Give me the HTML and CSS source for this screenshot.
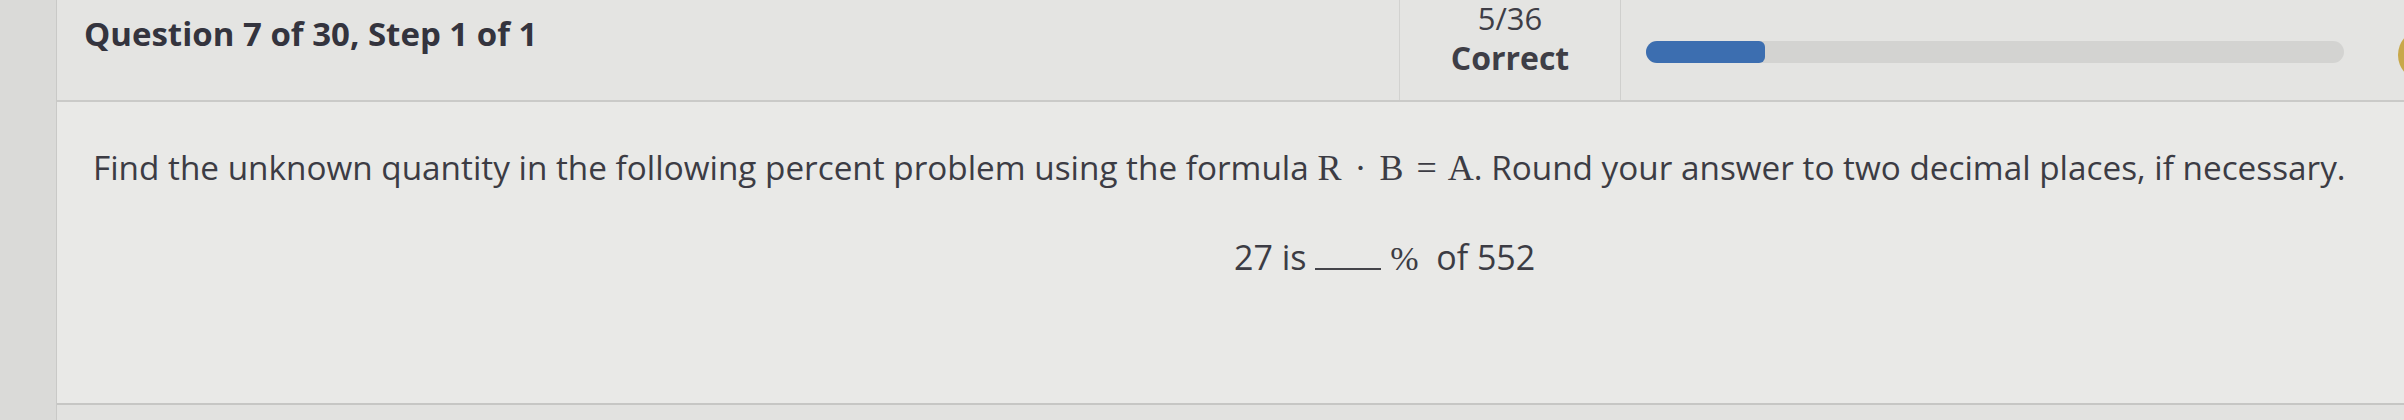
FILE: index.html
```html
<!DOCTYPE html>
<html lang="en">
<head>
    <meta charset="UTF-8">
    <meta name="viewport" content="width=device-width, initial-scale=1.0">
    <title>Question 7 of 30</title>
    <link rel="stylesheet" href="styles.css">
</head>
<body>
    <div class="page">
        <div class="sidebar"></div>

        <div class="main">
            <div class="header">
                <div class="title">Question 7 of 30, Step 1 of 1</div>
                <div class="score">
                    <div class="score-count">5/36</div>
                    <div class="score-label">Correct</div>
                </div>
                <div class="progress">
                    <div class="track">
                        <div class="fill" style="width: 17%"></div>
                    </div>
                </div>
                <div class="edge-button"></div>
            </div>

            <div class="question">
                <p class="prompt">
                    Find the unknown quantity in the following percent problem using the formula
                    <span class="math">R &middot; B = A</span>. Round your answer to two decimal places, if necessary.
                </p>
                <p class="problem">
                    27 is <span class="blank"></span> <span class="pct">%</span>&nbsp; of 552
                </p>
            </div>
            <div class="footer"></div>
        </div>
    </div>
</body>
</html>
```

FILE: styles.css
```css
html, body {
    margin: 0;
    height: 420px;
    overflow: hidden;
}
body {
    font-family: "Open Sans", "Liberation Sans", sans-serif;
    background-color: #dcdcda;
    color: #3a3a42;
}
.page {
    display: flex;
    height: 420px;
}
.sidebar {
    width: 56px;
    border-right: 1px solid #c9c9c7;
    background-color: #dadad8;
}
.main {
    flex: 1;
    display: flex;
    flex-direction: column;
}
.header {
    position: relative;
    display: flex;
    height: 100px;
    border-bottom: 2px solid #cacac8;
    background-color: #e4e4e2;
}
.title {
    flex: 1;
    padding: 12px 0 0 27px;
    font-size: 33px;
    line-height: 44px;
    font-weight: bold;
    color: #34343e;
}
.score {
    width: 220px;
    border-left: 1px solid #d2d2d0;
    border-right: 1px solid #cfcfcd;
    text-align: center;
    font-size: 31px;
    line-height: 40px;
    color: #3e3e46;
}
.score-count {
    margin-top: -2px;
}
.score-label {
    font-weight: bold;
    font-size: 32px;
}
.progress {
    width: 783px;
    padding: 41px 0 0 25px;
    box-sizing: border-box;
}
.track {
    width: 698px;
    height: 22px;
    border-radius: 11px;
    background-color: #d3d3d1;
    overflow: hidden;
}
.fill {
    height: 100%;
    border-radius: 6px;
    background-color: #3c6eb0;
}
.edge-button {
    position: absolute;
    right: -40px;
    top: 30px;
    width: 46px;
    height: 50px;
    border-radius: 50%;
    background-color: #c8a84a;
}
.question {
    flex: 1;
    padding: 44px 0 0 36px;
    background-color: #e9e9e7;
    border-bottom: 2px solid #c6c6c4;
}
.prompt {
    margin: 0;
    font-size: 33.3px;
    line-height: 42px;
    color: #3c3c44;
}
.math {
    font-family: "Liberation Serif", serif;
    font-size: 36px;
    word-spacing: 4px;
}
.problem {
    margin: 47px 0 0 1141px;
    font-size: 34px;
    line-height: 42px;
    color: #3c3c44;
}
.blank {
    display: inline-block;
    width: 66px;
    border-bottom: 2px solid #44444a;
}
.pct {
    font-family: "Liberation Serif", serif;
}
.footer {
    height: 15px;
    background-color: #e2e2e0;
}
```
